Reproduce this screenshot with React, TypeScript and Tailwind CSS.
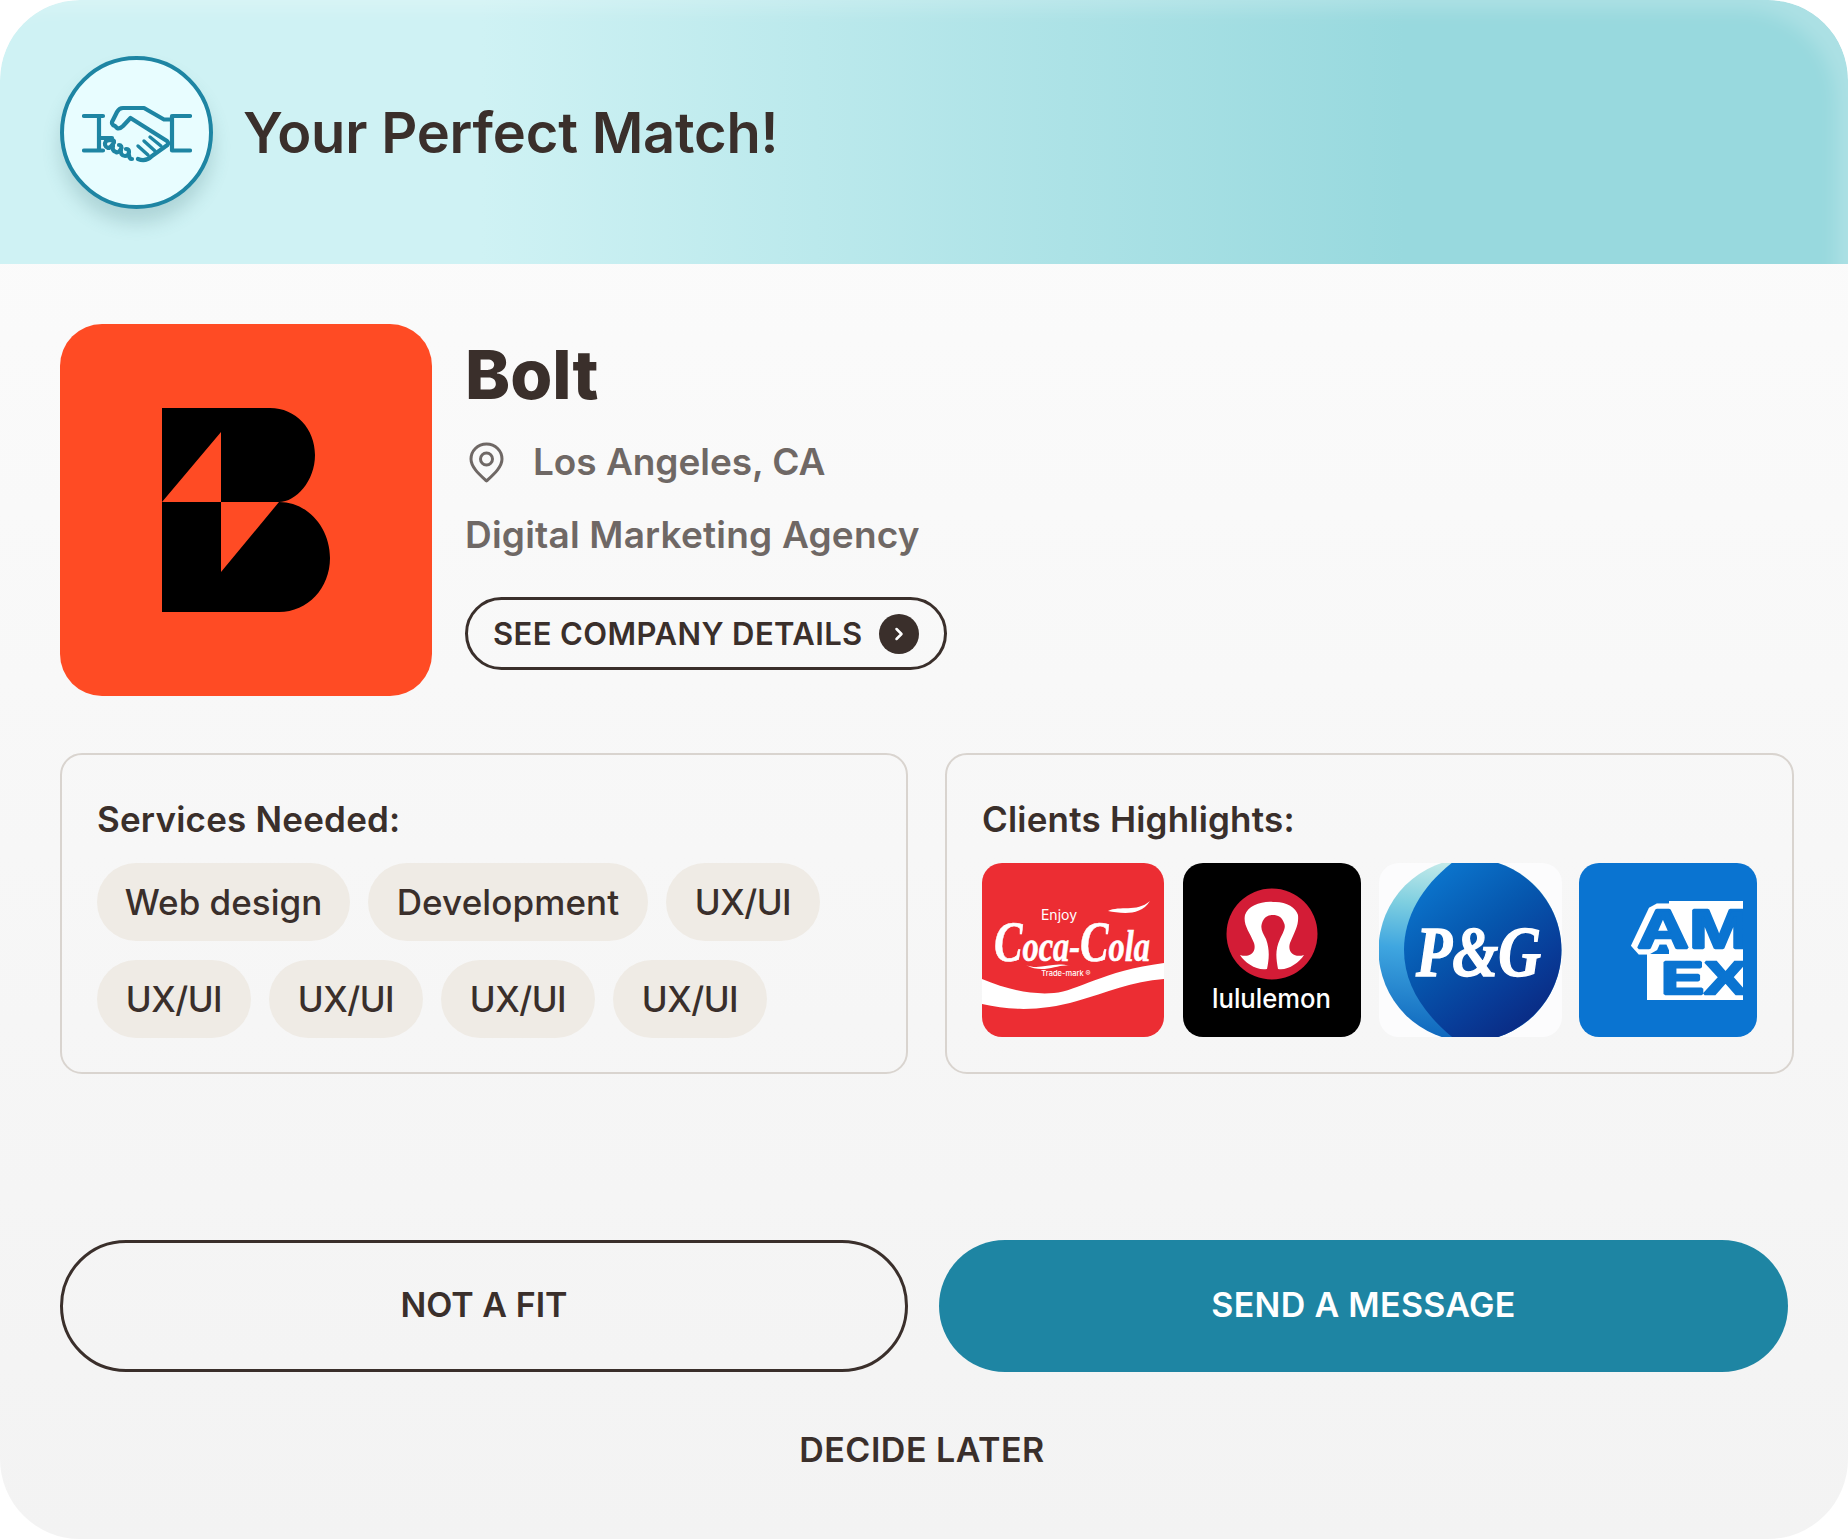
import React from "react";
import { ChevronRight } from "lucide-react";

const services = [
  { name: "Web design", cls: "w-[253px]" },
  { name: "Development", cls: "w-[280px] tracking-[0.1px]" },
  { name: "UX/UI", cls: "w-[154px] tracking-[-0.5px]" },
  { name: "UX/UI", cls: "w-[154px] tracking-[-0.5px]" },
  { name: "UX/UI", cls: "w-[154px] tracking-[-0.5px]" },
  { name: "UX/UI", cls: "w-[154px] tracking-[-0.5px]" },
  { name: "UX/UI", cls: "w-[154px] tracking-[-0.5px]" },
];

const HandshakeBadge = () => (
  <div className="w-[153px] h-[153px] rounded-full bg-[#e8fdff] border-[4px] border-[#1e85a3] shadow-[0_14px_18px_rgba(60,110,115,0.22)] flex items-center justify-center shrink-0">
    <svg viewBox="0 0 110 62" className="w-[110px] h-[62px]" fill="none" stroke="#1e85a3" strokeWidth="4.2" strokeLinecap="round" strokeLinejoin="round">
      <path d="M2 15H21M17 15V49.5M2 49.5H21" />
      <path d="M108 15H91M90 15V49.5M108 49.5H91" />
      <path d="M90 18.5H82L62 7H41C38 7 36 9 35 11L31 19C29 22 30 24 33 25L35 27C37 28 39 27 41 25L48.5 17L85 40C87 42 86 44 84 45L70 55C66 59 61 60 56 58" />
      <path d="M18 37H30" />
      <path d="M24 40C22 43 23 46 26 47C28 47 29 46 31 43C33 41 32 39 30 39C28 39 26 39 24 40Z" />
      <path d="M31 45C30 48 31 50 34 51C36 52 38 50 39 48C40 46 39 44 37 44" />
      <path d="M39 49C38 52 40 55 43 55C45 55 47 53 47 51C47 49 46 48 44 48" />
      <path d="M47 54C47 56 48 58 50 58" />
      <path d="M68 36L79 45M62 40L73 50M56 45L66 54" strokeWidth="3.4" />
    </svg>
  </div>
);

const BoltLogo = () => (
  <div className="w-[372px] h-[372px] rounded-[42px] bg-[#ff4b24] flex items-center justify-center shrink-0">
    <svg viewBox="0 0 168 204" className="w-[168px] h-[204px]">
      <path d="M0 0H108C134 0 153 21 153 47C153 73 134 94 117 94H0ZM0 94L59 24V94Z" fill="#000" fillRule="evenodd" />
      <path d="M0 94H117C146 94 168 120 168 150C168 180 146 204 117 204H0ZM59 94V164L117 94Z" fill="#000" fillRule="evenodd" />
    </svg>
  </div>
);

const CocaCola = () => (
  <svg viewBox="0 0 182 174" className="w-[182px] h-[174px] rounded-[20px] shrink-0 bg-[#ec2d33]">
    <path d="M0 116C24 126 48 132 72 130C96 128 120 108 182 100V116C150 118 124 130 95 138C60 148 30 148 0 141Z" fill="#fff" />
    <text x="77" y="57" textAnchor="middle" fontFamily="Inter, sans-serif" fontSize="14" fill="#fff">Enjoy</text>
    <text x="12" y="98" textLength="156" lengthAdjust="spacingAndGlyphs" fontFamily="'Liberation Serif', serif" fontStyle="italic" fontWeight="700" fontSize="44" fill="#fff" stroke="#fff" strokeWidth="0.6">
      <tspan fontSize="58">C</tspan>oca-<tspan fontSize="58">C</tspan>ola
    </text>
    {/* swashes of the script */}
    <path d="M44 102C58 108 70 98 88 103C76 100 62 112 44 102Z" fill="#fff" />
    <path d="M126 48C138 42 154 50 168 38C158 54 138 50 126 48Z" fill="#fff" />
    <text x="84" y="113" textAnchor="middle" fontFamily="Inter, sans-serif" fontSize="7.5" fontWeight="500" fill="#fff">Trade-mark ®</text>
  </svg>
);

const Lululemon = () => (
  <svg viewBox="0 0 178 174" className="w-[178px] h-[174px] rounded-[20px] shrink-0 bg-black">
    <circle cx="89" cy="71" r="45.5" fill="#d31c36" />
    <path d="M57 92C66 95 74 90 71 80C66 68 60 62 62 52C65 43 78 38 90 39C102 38 113 44 115 52C116 62 112 68 107 80C104 90 112 95 121 92C116 100 104 108 95 106C93 95 92 87 97 76C101 68 103 64 101 60C99 54 95 52 90 52C85 52 81 54 79 60C77 66 80 70 83 76C87 87 86 96 84 106C74 108 62 100 57 92Z" fill="#fff" />
    <text x="29" y="145" textLength="119" lengthAdjust="spacingAndGlyphs" fontFamily="Inter, sans-serif" fontWeight="500" fontSize="27" fill="#fff">lululemon</text>
  </svg>
);

const PG = () => (
  <svg viewBox="0 0 183 174" className="w-[183px] h-[174px] rounded-[20px] shrink-0 bg-[#fcfcfd]">
    <defs>
      <linearGradient id="pg-rim" x1="0.3" y1="0" x2="0.2" y2="1">
        <stop offset="0" stopColor="#c8ecea" />
        <stop offset="0.25" stopColor="#7fcfe0" />
        <stop offset="0.5" stopColor="#3fa6e0" />
        <stop offset="1" stopColor="#0b63bb" />
      </linearGradient>
      <linearGradient id="pg-core" x1="0.25" y1="0.05" x2="0.8" y2="0.9">
        <stop offset="0" stopColor="#0b74cc" />
        <stop offset="0.4" stopColor="#0657ae" />
        <stop offset="0.75" stopColor="#083c98" />
        <stop offset="1" stopColor="#0a2b84" />
      </linearGradient>
      <clipPath id="pg-clip">
        <rect x="0" y="0" width="183" height="174" />
      </clipPath>
    </defs>
    <g clipPath="url(#pg-clip)">
      <circle cx="91" cy="87" r="91.5" fill="url(#pg-rim)" />
      <path d="M78 -4C45 20 25 52 25 87C25 122 45 152 78 178L91 178.5C141 178.5 182.5 137 182.5 87C182.5 37 141 -4.5 91 -4.5Z" fill="url(#pg-core)" />
    </g>
    <text x="37" y="113" textLength="125" lengthAdjust="spacingAndGlyphs" fontFamily="'Liberation Serif', serif" fontStyle="italic" fontWeight="700" fontSize="72" fill="#fff" stroke="#fff" strokeWidth="1.4">P&amp;G</text>
  </svg>
);

const Amex = () => (
  <svg viewBox="0 0 178 174" className="w-[178px] h-[174px] rounded-[20px] shrink-0 bg-[#0a74d1]">
    <defs>
      <clipPath id="amex-clip">
        <rect x="0" y="0" width="164" height="174" />
      </clipPath>
    </defs>
    <g clipPath="url(#amex-clip)" fontFamily="'Liberation Sans', sans-serif" fontWeight="700" strokeLinejoin="miter" strokeMiterlimit="1.2">
      <rect x="68" y="91" width="96" height="46" fill="#fff" />
      <rect x="90" y="38" width="74" height="53" fill="#fff" />
      <g fill="#fff" stroke="#fff" strokeWidth="13">
        <text x="58" y="85" textLength="112" lengthAdjust="spacingAndGlyphs" fontSize="56">AM</text>
      </g>
      <g fill="#0a74d1" stroke="#0a74d1" strokeWidth="2.6">
        <text x="58" y="85" textLength="112" lengthAdjust="spacingAndGlyphs" fontSize="56">AM</text>
        <text x="82" y="131" textLength="86" lengthAdjust="spacingAndGlyphs" fontSize="46">EX</text>
      </g>
    </g>
  </svg>
);

export default function App() {
  return (
    <div className="w-[1848px] h-[1539px] bg-white font-['Inter',sans-serif] text-[#3a2f2b]">
      <div className="h-full rounded-[80px] overflow-hidden bg-gradient-to-b from-[#fcfcfc] to-[#f3f3f3]">
        {/* Header band */}
        <header className="h-[264px] rounded-t-[80px] flex items-center gap-[30px] pl-[60px] bg-[linear-gradient(90deg,#cff2f4_0%,#cff2f4_26%,#98d9de_76%,#98d9de_100%)] shadow-[inset_-26px_24px_18px_-14px_rgba(255,255,255,0.2)]">
          <HandshakeBadge />
          <h1 className="mt-[2px] text-[56px] leading-[66px] font-semibold tracking-[-0.2px]">Your Perfect Match!</h1>
        </header>

        <main className="pl-[60px] pt-[60px]">
          {/* Company */}
          <section className="flex gap-[33px]">
            <BoltLogo />
            <div className="flex flex-col items-start">
              <h2 className="mt-[12px] text-[68px] leading-[76px] font-extrabold">Bolt</h2>
              <div className="mt-[28px] flex items-center gap-[29px] ml-[4px] text-[#6f6865]">
                <svg viewBox="0 0 35 41" className="w-[35px] h-[41px]" fill="none" stroke="#6f6865" strokeWidth="3">
                  <path d="M17.5 2C8.5 2 2 9 2 17C2 25 10 32 17.5 39C25 32 33 25 33 17C33 9 26.5 2 17.5 2Z" strokeLinejoin="round" />
                  <circle cx="17.5" cy="17" r="6" />
                </svg>
                <span className="text-[37px] leading-[44px] font-semibold tracking-[-0.05px]">Los Angeles, CA</span>
              </div>
              <p className="mt-[29px] text-[37px] leading-[44px] font-semibold tracking-[0.2px] text-[#6f6865]">Digital Marketing Agency</p>
              <button className="mt-[40px] h-[73px] w-[482px] rounded-full border-[3px] border-[#3a2f2b] flex items-center pl-[25px] gap-[16px]">
                <span className="text-[31px] leading-[36px] font-semibold tracking-[0.4px] whitespace-nowrap">SEE COMPANY DETAILS</span>
                <span className="w-[40px] h-[40px] rounded-full bg-[#3a2f2b] flex items-center justify-center shrink-0">
                  <ChevronRight size={20} strokeWidth={3} color="#fff" />
                </span>
              </button>
            </div>
          </section>

          {/* Cards */}
          <section className="mt-[57px] flex gap-[37px]">
            <div className="w-[848px] h-[321px] shrink-0 rounded-[22px] border-2 border-[#d9d4cf] px-[35px] pt-[44px]">
              <h3 className="text-[35px] leading-[40px] font-semibold tracking-[0.2px]">Services Needed:</h3>
              <div className="mt-[24px] flex flex-wrap gap-x-[18px] gap-y-[19px]">
                {services.map((s, i) => (
                  <span key={i} className={"h-[78px] rounded-full bg-[#efebe5] flex items-center justify-center text-[35px] font-medium " + s.cls}>
                    {s.name}
                  </span>
                ))}
              </div>
            </div>
            <div className="w-[849px] h-[321px] shrink-0 rounded-[22px] border-2 border-[#d9d4cf] px-[35px] pt-[44px]">
              <h3 className="text-[35px] leading-[40px] font-semibold tracking-[0.2px]">Clients Highlights:</h3>
              <div className="mt-[24px] flex">
                <CocaCola />
                <div className="ml-[19px]"><Lululemon /></div>
                <div className="ml-[18px]"><PG /></div>
                <div className="ml-[17px]"><Amex /></div>
              </div>
            </div>
          </section>

          {/* Actions */}
          <section className="mt-[166px] flex gap-[31px]">
            <button className="w-[848px] h-[132px] pb-[4px] rounded-full border-[3px] border-[#3a2f2b] text-[34px] font-semibold">NOT A FIT</button>
            <button className="w-[849px] h-[132px] pb-[4px] rounded-full bg-[#1e85a3] text-white text-[34px] font-semibold tracking-[0.3px]">SEND A MESSAGE</button>
          </section>
          <div className="mt-[58px] flex justify-center w-[1724px]">
            <button className="text-[34px] leading-[40px] font-semibold tracking-[0.5px]">DECIDE LATER</button>
          </div>
        </main>
      </div>
    </div>
  );
}
